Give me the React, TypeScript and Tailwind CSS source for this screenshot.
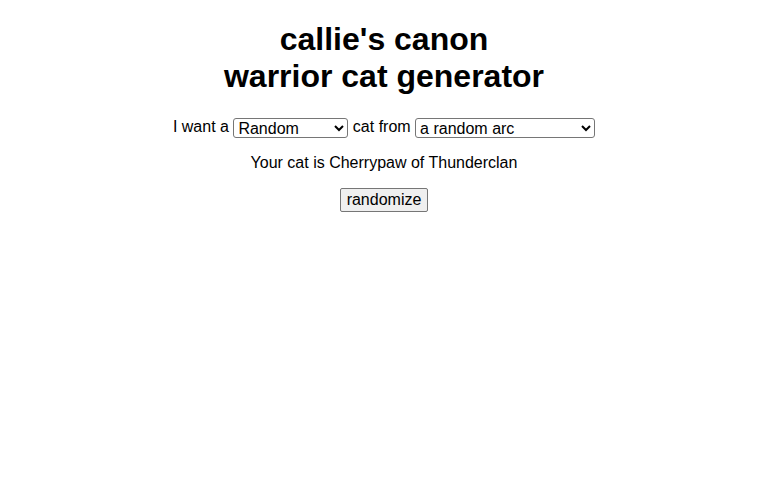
import { useState } from "react";

const ranks = ["Random", "Warrior", "Apprentice", "Kit", "Leader", "Deputy", "Medicine cat"];
const arcs = ["a random arc", "The Prophecies Begin", "The New Prophecy", "Power of Three", "Omen of the Stars"];

export default function App() {
  const [rank, setRank] = useState("Random");
  const [arc, setArc] = useState("a random arc");

  return (
    <div className="min-h-screen bg-white text-center text-black text-base" style={{ fontFamily: '"Liberation Sans", Arial, sans-serif' }}>
      <h1 className="pt-[21px] mb-[21px] text-[32px] font-bold leading-[37px]">
        callie's canon
        <br />
        warrior cat generator
      </h1>

      <p className="mb-4 leading-[21px]">
        I want a{" "}
        <select
          value={rank}
          onChange={(e) => setRank(e.target.value)}
          className="w-[115px] h-[20px] border border-[#767676] rounded-[3px] bg-white align-middle text-base leading-[18px] appearance-auto"
        >
          {ranks.map((r) => (
            <option key={r}>{r}</option>
          ))}
        </select>{" "}
        cat from{" "}
        <select
          value={arc}
          onChange={(e) => setArc(e.target.value)}
          className="w-[180px] h-[20px] border border-[#767676] rounded-[3px] bg-white align-middle text-base leading-[18px] appearance-auto"
        >
          {arcs.map((a) => (
            <option key={a}>{a}</option>
          ))}
        </select>
      </p>

      <p className="mb-4 leading-[18px]">Your cat is Cherrypaw of Thunderclan</p>

      <p>
        <button className="h-[24px] px-[6px] border border-[#767676] rounded-[2px] bg-[#efefef] text-base leading-[18px]">
          randomize
        </button>
      </p>
    </div>
  );
}
